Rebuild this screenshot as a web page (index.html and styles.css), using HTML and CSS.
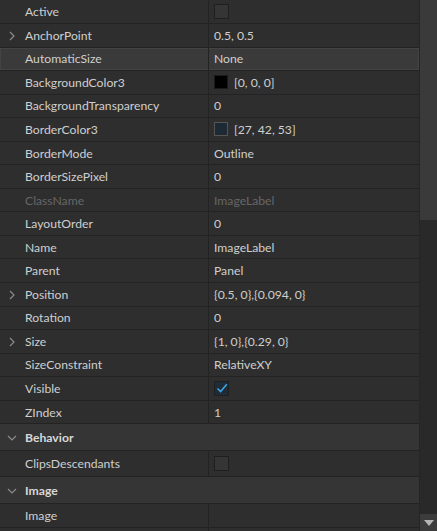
FILE: index.html
```html
<!DOCTYPE html>
<html lang="en">
<head>
    <meta charset="UTF-8">
    <meta name="viewport" content="width=device-width, initial-scale=1.0">
    <title>Properties</title>
    <link rel="stylesheet" href="styles.css">
</head>
<body>
    <div class="panel">
        <div class="list">
            <div class="row first">
                <div class="name">Active</div>
                <div class="value"><span class="check"></span></div>
            </div>
            <div class="row">
                <div class="name"><svg class="arrow" width="6" height="10" viewBox="0 0 6 10"><path d="M1 1 L5 5 L1 9" fill="none" stroke="#8a8a8a" stroke-width="1.2"/></svg>AnchorPoint</div>
                <div class="value">0.5, 0.5</div>
            </div>
            <div class="row hover">
                <div class="name">AutomaticSize</div>
                <div class="value">None</div>
            </div>
            <div class="row">
                <div class="name">BackgroundColor3</div>
                <div class="value"><span class="swatch black"></span>[0, 0, 0]</div>
            </div>
            <div class="row">
                <div class="name">BackgroundTransparency</div>
                <div class="value">0</div>
            </div>
            <div class="row">
                <div class="name">BorderColor3</div>
                <div class="value"><span class="swatch navy"></span>[27, 42, 53]</div>
            </div>
            <div class="row">
                <div class="name">BorderMode</div>
                <div class="value">Outline</div>
            </div>
            <div class="row">
                <div class="name">BorderSizePixel</div>
                <div class="value">0</div>
            </div>
            <div class="row disabled">
                <div class="name">ClassName</div>
                <div class="value">ImageLabel</div>
            </div>
            <div class="row">
                <div class="name">LayoutOrder</div>
                <div class="value">0</div>
            </div>
            <div class="row">
                <div class="name">Name</div>
                <div class="value">ImageLabel</div>
            </div>
            <div class="row">
                <div class="name">Parent</div>
                <div class="value">Panel</div>
            </div>
            <div class="row">
                <div class="name"><svg class="arrow" width="6" height="10" viewBox="0 0 6 10"><path d="M1 1 L5 5 L1 9" fill="none" stroke="#8a8a8a" stroke-width="1.2"/></svg>Position</div>
                <div class="value">{0.5, 0},{0.094, 0}</div>
            </div>
            <div class="row">
                <div class="name">Rotation</div>
                <div class="value">0</div>
            </div>
            <div class="row">
                <div class="name"><svg class="arrow" width="6" height="10" viewBox="0 0 6 10"><path d="M1 1 L5 5 L1 9" fill="none" stroke="#8a8a8a" stroke-width="1.2"/></svg>Size</div>
                <div class="value">{1, 0},{0.29, 0}</div>
            </div>
            <div class="row">
                <div class="name">SizeConstraint</div>
                <div class="value">RelativeXY</div>
            </div>
            <div class="row">
                <div class="name">Visible</div>
                <div class="value">
                    <span class="check on">
                        <svg width="12" height="12" viewBox="0 0 12 12"><path d="M1.5 6.5 L4.6 9.5 L10.8 2.2" fill="none" stroke="#3aa3e3" stroke-width="1.7"/></svg>
                    </span>
                </div>
            </div>
            <div class="row">
                <div class="name">ZIndex</div>
                <div class="value">1</div>
            </div>
            <div class="group">
                <svg class="chev" width="10" height="6" viewBox="0 0 10 6"><path d="M1 1 L5 5 L9 1" fill="none" stroke="#8a8a8a" stroke-width="1.2"/></svg>
                Behavior
            </div>
            <div class="row tall">
                <div class="name">ClipsDescendants</div>
                <div class="value"><span class="check"></span></div>
            </div>
            <div class="group">
                <svg class="chev" width="10" height="6" viewBox="0 0 10 6"><path d="M1 1 L5 5 L9 1" fill="none" stroke="#8a8a8a" stroke-width="1.2"/></svg>
                Image
            </div>
            <div class="row">
                <div class="name">Image</div>
                <div class="value"></div>
            </div>
            <div class="row">
                <div class="name"></div>
                <div class="value"></div>
            </div>
        </div>
        <div class="scrollbar">
            <div class="thumb"></div>
            <div class="track"></div>
            <div class="down">
                <svg width="10" height="6" viewBox="0 0 10 6"><path d="M0 0 L10 0 L5 6 Z" fill="#b5b5b5"/></svg>
            </div>
        </div>
    </div>
</body>
</html>
```

FILE: styles.css
```css
body {
    margin: 0;
    background-color: #2e2e2e;
    font-family: Lato, 'Open Sans', sans-serif;
    font-size: 12.2px;
    color: #cfcfcf;
    overflow: hidden;
}
.panel {
    display: flex;
    height: 531px;
}
.list {
    width: 420px;
    overflow: hidden;
}
.row {
    display: flex;
    height: 23.55px;
    border-bottom: 1px solid #232323;
    box-sizing: border-box;
}
.row.first {
    height: 24px;
}
.row.tall {
    height: 26px;
}
.row.hover {
    background-color: #3a3a3a;
    box-shadow: inset 0 0 0 1px #444;
}
.row.disabled {
    color: #666;
}
.name {
    width: 209px;
    padding-left: 25px;
    box-sizing: border-box;
    border-right: 1px solid #232323;
    display: flex;
    align-items: center;
    position: relative;
}
.arrow {
    position: absolute;
    left: 9px;
    top: 7px;
}
.value {
    flex: 1;
    padding-left: 5px;
    display: flex;
    align-items: center;
}
.check {
    width: 13px;
    height: 13px;
    background-color: #353535;
    border: 1px solid #1f1f1f;
    display: flex;
    align-items: center;
    justify-content: center;
}
.check.on {
    background-color: #1f2b36;
}
.swatch {
    width: 12px;
    height: 12px;
    margin-right: 6px;
    border: 1px solid #1a1a1a;
}
.swatch.black {
    background-color: #000;
}
.swatch.navy {
    background-color: rgb(27, 42, 53);
    border-color: #555;
}
.group {
    height: 27px;
    background-color: #353535;
    border-bottom: 1px solid #232323;
    box-sizing: border-box;
    display: flex;
    align-items: center;
    padding-left: 25px;
    font-weight: bold;
    color: #d8d8d8;
    position: relative;
}
.chev {
    position: absolute;
    left: 7px;
    top: 11px;
}
.scrollbar {
    width: 17px;
    display: flex;
    flex-direction: column;
    background-color: #292929;
    border-left: 1px solid #252525;
}
.thumb {
    height: 220px;
    background-color: #3a3a3a;
}
.track {
    flex: 1;
}
.down {
    height: 17px;
    background-color: #3c3c3c;
    display: flex;
    align-items: center;
    justify-content: center;
}
```
